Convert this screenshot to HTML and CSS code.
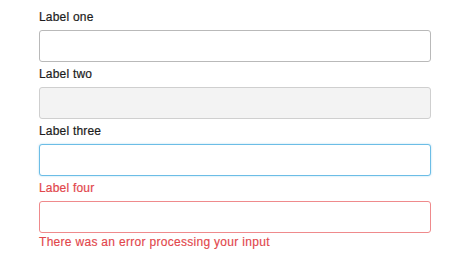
FILE: index.html
```html
<!DOCTYPE html>
<html lang="en">
<head>
<meta charset="utf-8">
<title>Form fields</title>
<link rel="stylesheet" href="styles.css">
</head>
<body>
<form class="form">
  <div class="field">
    <label class="label" for="f1">Label one</label>
    <input class="input" id="f1" type="text">
  </div>
  <div class="field">
    <label class="label" for="f2">Label two</label>
    <input class="input input--disabled" id="f2" type="text" disabled>
  </div>
  <div class="field">
    <label class="label" for="f3">Label three</label>
    <input class="input input--focus" id="f3" type="text">
  </div>
  <div class="field field--error">
    <label class="label" for="f4">Label four</label>
    <input class="input input--error" id="f4" type="text">
    <div class="error">There was an error processing your input</div>
  </div>
</form>
</body>
</html>
```

FILE: styles.css
```css
html, body {
  margin: 0;
  padding: 0;
  background: #ffffff;
}

body {
  font-family: "Liberation Sans", Arial, sans-serif;
  font-size: 12px;
  color: #1c1c1c;
}

.form {
  display: flex;
  flex-direction: column;
  gap: 4px;
  padding: 9px 0 0 39px;
  width: 392px;
}

.field {
  display: flex;
  flex-direction: column;
}

.label {
  display: block;
  line-height: 16px;
  margin-bottom: 5px;
  letter-spacing: 0.2px;
  -webkit-text-stroke: 0.2px currentColor;
}

.input {
  box-sizing: border-box;
  width: 392px;
  height: 32px;
  margin: 0;
  padding: 0 8px;
  border: 1px solid #b9b9b9;
  border-radius: 3px;
  background: #ffffff;
  font: inherit;
  outline: none;
}

.input--disabled {
  background: #f3f3f3;
  border-color: #cfcfcf;
}

.input--focus {
  border-color: #6cbde6;
  box-shadow: 0 0 2px rgba(108, 189, 230, 0.6);
}

.field--error .label {
  color: #e2474c;
}

.input--error {
  border-color: #ef8a8c;
}

.error {
  margin-top: 1px;
  line-height: 16px;
  color: #e2474c;
  letter-spacing: 0.3px;
  -webkit-text-stroke: 0.15px currentColor;
}
```
